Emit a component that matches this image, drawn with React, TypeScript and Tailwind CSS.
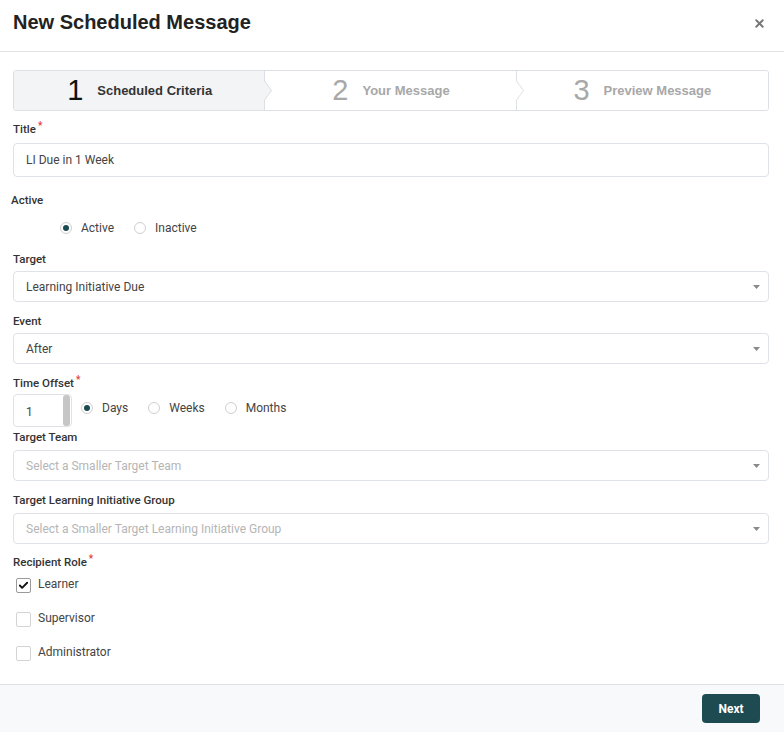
import { Check, X } from 'lucide-react';

const body = { fontFamily: 'Roboto, "Liberation Sans", Arial, sans-serif' };
const arial = { fontFamily: '"Liberation Sans", Arial, sans-serif' };

function Label({ text, required, className = '' }: { text: string; required?: boolean; className?: string }) {
  return (
    <div className={`h-4 text-[11.5px] leading-4 font-medium text-[#333] ${className}`}>
      {text}
      {required && <span className="relative -top-1 ml-0.5 text-[10px] leading-none text-[#e03c3c]">*</span>}
    </div>
  );
}

function Caret() {
  return (
    <svg width="7" height="4" viewBox="0 0 7 4" className="mr-2">
      <path d="M0 0 L7 0 L3.5 4 Z" fill="#8a8a8a" />
    </svg>
  );
}

function Select({ value, placeholder, className = '' }: { value?: string; placeholder?: string; className?: string }) {
  return (
    <div
      className={`flex h-[31px] items-center justify-between rounded-[4px] border border-[#dfe2e6] bg-white pl-3 text-[12px] ${className}`}
    >
      <span className={value ? 'text-[#444]' : 'text-[#b5b5b5]'}>{value ?? placeholder}</span>
      <Caret />
    </div>
  );
}

function Radio({ label, checked }: { label: string; checked?: boolean }) {
  return (
    <div className="flex items-center text-[12px] text-[#444]">
      <span className="flex h-[12px] w-[12px] items-center justify-center rounded-full border border-[#cfcfcf] bg-white">
        {checked && <span className="h-[6px] w-[6px] rounded-full bg-[#1b4a50]" />}
      </span>
      <span className="ml-[9px]">{label}</span>
    </div>
  );
}

function Checkbox({ label, checked }: { label: string; checked?: boolean }) {
  return (
    <div className="flex h-4 items-center text-[12px] text-[#444]">
      <span
        className={`ml-[3px] flex h-[15px] w-[15px] items-center justify-center rounded-[2px] border bg-white ${
          checked ? 'border-[#9a9a9a]' : 'border-[#d4d4d4]'
        }`}
      >
        {checked && <Check size={11} strokeWidth={4} className="text-[#111]" />}
      </span>
      <span className="ml-[7px] -mt-[2px]">{label}</span>
    </div>
  );
}

function Step({ n, label, active, last }: { n: number; label: string; active?: boolean; last?: boolean }) {
  return (
    <div className={`relative flex flex-1 items-center justify-center ${active ? 'bg-[#f3f4f6]' : 'bg-white'}`}>
      <span
        className={`text-[29px] leading-none ${active ? 'text-[#111]' : 'text-[#a8a8a8]'}`}
        style={arial}
      >
        {n}
      </span>
      <span
        className={`ml-[14px] text-[13px] font-bold ${active ? 'text-[#333]' : 'text-[#a8a8a8]'}`}
        style={arial}
      >
        {label}
      </span>
      {!last && (
        <svg width="9" height="39" viewBox="0 0 9 39" className="absolute -right-[8px] top-0 z-10">
          {active && <path d="M0 0 L1 0 L1 10 L8 19.5 L1 29 L1 39 L0 39 Z" fill="#f3f4f6" />}
          <path d="M0.5 0 L0.5 10 L7.5 19.5 L0.5 29 L0.5 39" fill="none" stroke="#dcdfe3" strokeWidth="1" />
        </svg>
      )}
    </div>
  );
}

export default function App() {
  return (
    <div className="flex h-[732px] w-[784px] flex-col bg-white" style={body}>
      <div className="flex h-[52px] items-center justify-between border-b border-[#e3e3e3] pl-[13px] pr-[18px]">
        <h1 className="-mt-[8px] text-[20px] font-bold text-[#222]" style={arial}>
          New Scheduled Message
        </h1>
        <X size={13} strokeWidth={3.5} className="-mt-[4px] text-[#777]" />
      </div>

      <div className="flex-1 pl-[13px] pr-[15px]">
        <div className="mt-[18px] flex h-[41px] overflow-hidden rounded-[3px] border border-[#dcdfe3]">
          <Step n={1} label="Scheduled Criteria" active />
          <Step n={2} label="Your Message" />
          <Step n={3} label="Preview Message" last />
        </div>

        <Label text="Title" required className="mt-[10px]" />
        <div className="mt-[6px] flex h-[34px] items-center rounded-[4px] border border-[#dfe2e6] pl-3 text-[12px] text-[#444]">
          LI Due in 1 Week
        </div>

        <Label text="Active" className="mt-[15px] -ml-[2px]" />
        <div className="mt-[12px] flex h-4 items-center gap-[20px] pl-[47px]">
          <Radio label="Active" checked />
          <Radio label="Inactive" />
        </div>

        <Label text="Target" className="mt-[15px]" />
        <Select value="Learning Initiative Due" className="mt-[4px]" />

        <Label text="Event" className="mt-[11px]" />
        <Select value="After" className="mt-[4px]" />

        <Label text="Time Offset" required className="mt-[11px]" />
        <div className="mt-[3px] flex items-center">
          <div className="flex h-[33px] w-[59px] items-center justify-between rounded-[4px] border border-[#dfe2e6] pl-3 pr-[1px] text-[12px] text-[#444]">
            <span className="mt-[3px]">1</span>
            <span className="h-[31px] w-[7px] rounded-[3px] bg-[#c6c6c6]" />
          </div>
          <div className="-mt-[6px] ml-[9px] flex items-center gap-[20px]">
            <Radio label="Days" checked />
            <Radio label="Weeks" />
            <Radio label="Months" />
          </div>
        </div>

        <Label text="Target Team" className="mt-[2px]" />
        <Select placeholder="Select a Smaller Target Team" className="mt-[5px]" />

        <Label text="Target Learning Initiative Group" className="mt-[11px]" />
        <Select placeholder="Select a Smaller Target Learning Initiative Group" className="mt-[5px]" />

        <Label text="Recipient Role" required className="mt-[10px]" />
        <div className="mt-[7px] flex flex-col gap-[18px]">
          <Checkbox label="Learner" checked />
          <Checkbox label="Supervisor" />
          <Checkbox label="Administrator" />
        </div>
      </div>

      <div className="flex h-[48px] items-center justify-end border-t border-[#e0e0e0] bg-[#f8f9fa] pr-[24px]">
        <button className="h-[29px] w-[58px] rounded-[4px] bg-[#1d4b51] text-[12px] font-bold text-white">
          Next
        </button>
      </div>
    </div>
  );
}
